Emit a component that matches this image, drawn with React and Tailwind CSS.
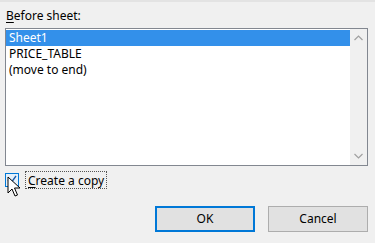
export default function App() {
  return (
    <div
      className="w-[375px] h-[243px] bg-[#f0f0f0] relative overflow-hidden text-[12px] text-black"
      style={{ fontFamily: '"Noto Sans", "Open Sans", sans-serif' }}
    >
      <div className="h-[2px] bg-[#e3e3e3]" />
      <div className="pl-[6px] mt-[6px] h-[16px] leading-[16px]">
        <span className="underline underline-offset-2">B</span>efore sheet:
      </div>
      <div className="ml-[5px] mt-[4px] w-[363px] h-[138px] border border-[#828790] bg-white flex">
        <div className="flex-1 flex flex-col pt-[1px]">
          <div className="h-[16px] leading-[16px] bg-[#3390ea] text-white pl-[3px]">Sheet1</div>
          <div className="h-[16px] leading-[16px] pl-[3px]">PRICE_TABLE</div>
          <div className="h-[16px] leading-[16px] pl-[3px]">(move to end)</div>
        </div>
        <div className="w-[17px] bg-[#f0f0f0] flex flex-col justify-between items-center py-[6px]">
          <svg width="9" height="6" viewBox="0 0 9 6">
            <path d="M0.5 5 L4.5 1 L8.5 5" fill="none" stroke="#a0a0a0" strokeWidth="1.2" />
          </svg>
          <svg width="9" height="6" viewBox="0 0 9 6">
            <path d="M0.5 1 L4.5 5 L8.5 1" fill="none" stroke="#a0a0a0" strokeWidth="1.2" />
          </svg>
        </div>
      </div>
      <div className="flex items-center mt-[5px] ml-[5px] h-[18px]">
        <div className="w-[14px] h-[14px] border border-[#0078d7] bg-[#e5f1fb] flex items-center justify-center">
          <svg width="12" height="12" viewBox="0 0 12 12">
            <path d="M2 6 L5 9 L10 2" fill="none" stroke="#1a5aa8" strokeWidth="1.3" />
          </svg>
        </div>
        <div className="ml-[6px] px-[2px] h-[18px] leading-[17px] border border-dotted border-[#555]">
          <span className="underline underline-offset-2">C</span>reate a copy
        </div>
      </div>
      <div className="flex mt-[17px] ml-[155px] gap-[13px]">
        <div className="w-[100px] h-[26px] border-2 border-[#0078d7] bg-[#e1e1e1] flex items-center justify-center">
          OK
        </div>
        <div className="w-[100px] h-[26px] border border-[#adadad] bg-[#e1e1e1] flex items-center justify-center">
          Cancel
        </div>
      </div>
      <svg className="absolute left-[7px] top-[176px]" width="16" height="24" viewBox="0 0 16 24">
        <path
          d="M1 1 L1 17 L5 13 L8 20 L10.5 19 L7.5 12 L13 12 Z"
          fill="white"
          stroke="black"
          strokeWidth="1"
          strokeLinejoin="miter"
        />
      </svg>
    </div>
  );
}
